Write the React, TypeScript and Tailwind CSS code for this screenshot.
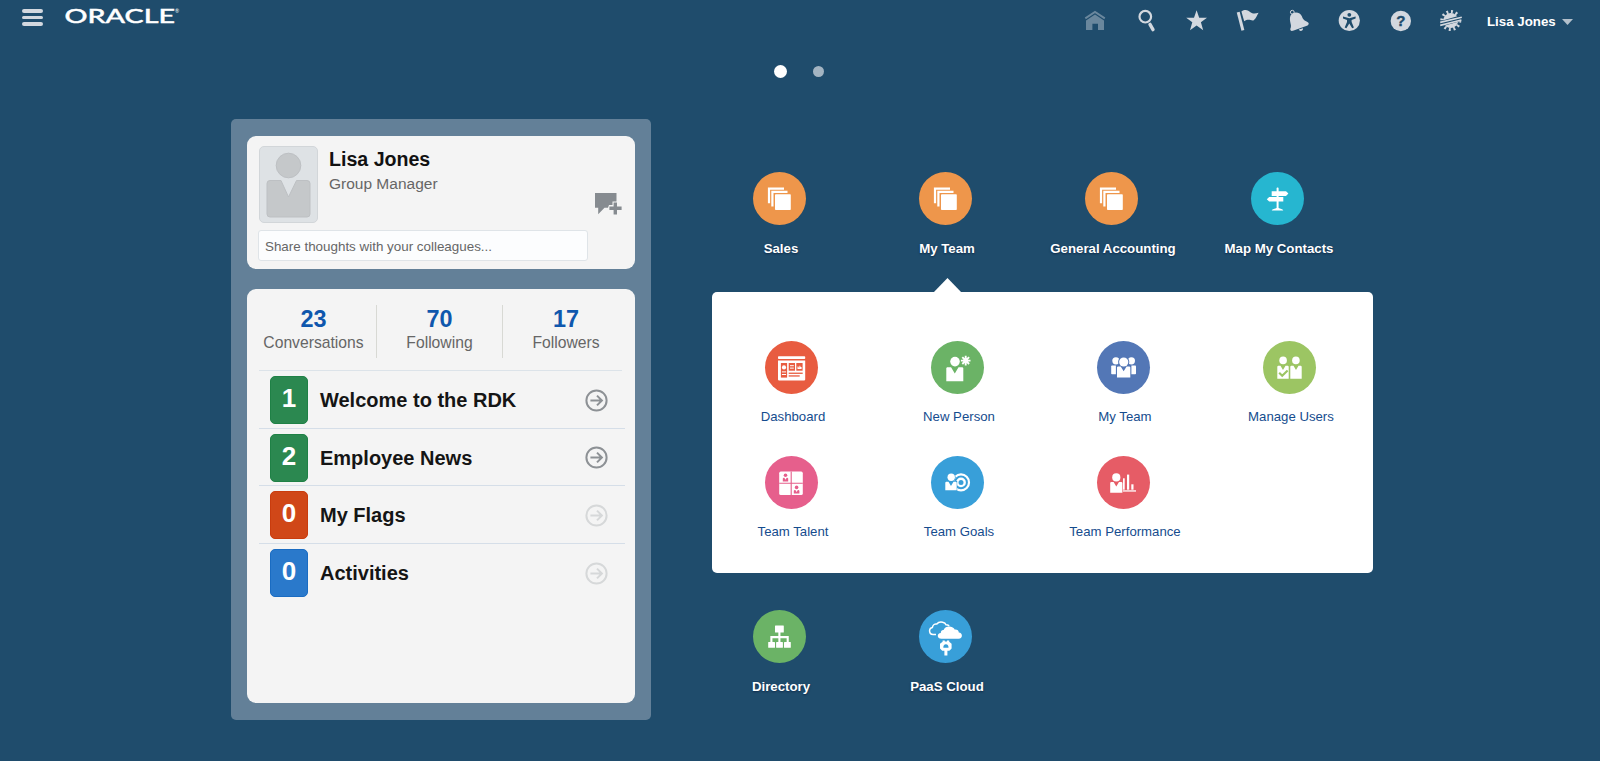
import { ReactNode } from "react";

interface Tile {
  label: string;
  color: string;
  icon: ReactNode;
}

interface NewsItem {
  count: number;
  label: string;
  color: string;
  active: boolean;
}

// Shoulders with a V-shaped collar, used by most of the people icons
function Body({ x, y, w, h, fill = "#fff" }: { x: number; y: number; w: number; h: number; fill?: string }) {
  const cx = x + w / 2;
  const n = w * 0.22;
  return (
    <path
      fill={fill}
      d={`M${x + 0.8} ${y}H${cx - n}L${cx} ${y + n * 1.7}L${cx + n} ${y}H${x + w - 0.8}L${x + w} ${y + 0.8}V${y + h}H${x}V${y + 0.8}Z`}
    />
  );
}

const stackIcon = (
  <>
    <path d="M16 31.3V16.6H31" fill="none" stroke="#fff" strokeWidth="2.2" />
    <path d="M19.4 34.6V19.9H34.5" fill="none" stroke="#fff" strokeWidth="2.2" />
    <rect x="22" y="22.3" width="15.8" height="15.8" rx="0.8" />
  </>
);

const signpostIcon = (
  <>
    <rect x="25.6" y="15.6" width="2" height="22" rx="0.8" />
    <path d="M20.7 19.2H35L37.4 21.5L35 23.9H20.7Z" />
    <path d="M32.3 24.9H18.2L15.8 27.2L18.2 29.5H32.3Z" />
    <path d="M20.7 38.4C21.2 36.8 24 36.9 25.6 36H27.6C29.2 36.9 31.8 36.8 32.3 38.4Z" />
  </>
);

const dashboardIcon = (
  <>
    <rect x="13" y="15.2" width="27.2" height="2.8" rx="0.8" />
    <path d="M13 19.4H40.2V38.6Q40.2 39.4 39.4 39.4H13.8Q13 39.4 13 38.6Z" />
    <g fill="#e85c40">
      <rect x="15.9" y="22" width="6.2" height="14.6" />
      <rect x="23.7" y="22" width="6.3" height="7.7" />
      <rect x="31.3" y="22" width="6.3" height="7.7" />
      <rect x="23.7" y="31.6" width="14" height="1.3" />
      <rect x="23.7" y="34.3" width="11" height="1.3" />
    </g>
    <circle cx="19" cy="26.4" r="2.1" />
    <rect x="16.9" y="30.4" width="4.2" height="1" />
    <rect x="16.9" y="33" width="4.2" height="1" />
    <rect x="25" y="24.2" width="3.8" height="1" />
    <rect x="25" y="26.6" width="3.8" height="1" />
    <path d="M32.5 28V25.5H33.5V26.5H34.4V24.8H35.4V26H36.6V28Z" />
  </>
);

const newPersonIcon = (
  <>
    <circle cx="24" cy="20.6" r="4.8" />
    <Body x={15.3} y={26.2} w={17} h={14} />
    <g stroke="#fff" strokeWidth="1.9">
      <path d="M34.7 14.8V24.4M29.9 19.6H39.5M31.3 16.2L38.1 23M38.1 16.2L31.3 23" />
    </g>
  </>
);

const teamIcon = (
  <>
    <circle cx="18.9" cy="19.8" r="3.6" />
    <circle cx="34.4" cy="19.8" r="3.6" />
    <rect x="14.2" y="24.4" width="8" height="8.8" rx="0.8" />
    <rect x="31" y="24.4" width="8" height="8.8" rx="0.8" />
    <rect x="18.9" y="24" width="15.5" height="13" fill="#5377b6" />
    <circle cx="26.7" cy="21" r="5.6" fill="#5377b6" />
    <circle cx="26.7" cy="21" r="4.6" />
    <Body x={20} y={25.4} w={13.3} h={11.2} />
  </>
);

const manageIcon = (
  <>
    <circle cx="20.1" cy="19.4" r="3.8" />
    <circle cx="32.9" cy="19.4" r="3.8" />
    <Body x={14.3} y={24.8} w={11.4} h={13} />
    <Body x={27.3} y={24.8} w={11.4} h={13} />
    <path d="M16.2 31.8L19.2 34.8L24.6 29.4" fill="none" stroke="#9cc563" strokeWidth="2.1" />
  </>
);

const talentIcon = (
  <>
    <rect x="14.2" y="15.6" width="23.6" height="23.4" rx="1.6" />
    <path d="M26.2 15.6V39M14.2 27.2H37.8" stroke="#e65f8c" strokeWidth="1.1" />
    <circle cx="20.5" cy="19.2" r="1.8" fill="#e65f8c" />
    <Body x={17.8} y={21.8} w={5.4} h={3.7} fill="#e65f8c" />
    <circle cx="31.6" cy="31.4" r="1.8" fill="#e65f8c" />
    <Body x={28.8} y={33.9} w={5.6} h={3.5} fill="#e65f8c" />
  </>
);

const goalsIcon = (
  <>
    <circle cx="30" cy="26.4" r="8" fill="none" stroke="#fff" strokeWidth="2.2" />
    <circle cx="30" cy="26.4" r="3.7" fill="none" stroke="#fff" strokeWidth="2.4" />
    <path d="M12 25H26.2V36H12Z" fill="#389fd9" />
    <circle cx="20.2" cy="21.3" r="4.4" fill="#389fd9" />
    <circle cx="20.2" cy="21.3" r="3.7" />
    <Body x={14.3} y={25.8} w={11.4} h={8.4} />
  </>
);

const performanceIcon = (
  <>
    <circle cx="19.3" cy="21.4" r="4.1" />
    <Body x={13.2} y={26} w={12.2} h={10.8} />
    <rect x="26" y="22.3" width="1.7" height="11.4" />
    <rect x="30" y="18.6" width="2.2" height="15.1" />
    <rect x="34.3" y="28.3" width="2.2" height="5.4" />
    <rect x="26" y="34.3" width="13" height="1.3" />
  </>
);

const directoryIcon = (
  <>
    <rect x="22" y="15.6" width="8.8" height="7" rx="0.5" />
    <path d="M26.4 22V32M18.4 32V27.1H34.7V32" fill="none" stroke="#fff" strokeWidth="2.1" />
    <rect x="15.2" y="32" width="6.8" height="5.8" rx="0.5" />
    <rect x="23.1" y="32" width="6.8" height="5.8" rx="0.5" />
    <rect x="31" y="32" width="6.8" height="5.8" rx="0.5" />
  </>
);

const cloudIcon = (
  <>
    <path
      d="M17 24.6H14.2C11.6 24.3 10.4 22.3 10.6 20.2C10.8 18.4 12.2 17.6 13.4 17.4C13.8 14.6 16 13.6 17.8 14C19 12.4 21.4 11.8 23.6 12.2C25.6 12.6 26.6 13.6 27 14.8C28.4 14.8 29.4 15.2 30.2 15.8"
      fill="none"
      stroke="#fff"
      strokeWidth="1.5"
    />
    <path d="M22.4 28.8C17.8 28.8 17.6 23.4 21.8 23C21.6 20.4 23.6 19.6 24.6 20C25.4 17.6 28.2 16.4 30.8 16.6C33.6 16.8 35.2 18.4 35.6 19.6C38 19.2 39.8 20.6 39.8 22.4C43.8 22.6 44.2 28.6 39.6 28.8Z" />
    <path d="M23.6 30.4H25.8V31.6H28V30.4H30.2V31.8L32.6 33.8V38.6L30.4 40.8H28.4V45.6H25.4V40.8H23.2L21 38.6V33.8L23.6 31.8Z" />
    <path d="M24.3 37.8Q24.2 34.6 26.9 34.3Q29.6 34.6 29.5 37.8Z" fill="#389fd9" />
  </>
);

const topTiles: Tile[] = [
  { label: "Sales", color: "bg-[#ee964b]", icon: stackIcon },
  { label: "My Team", color: "bg-[#ee964b]", icon: stackIcon },
  { label: "General Accounting", color: "bg-[#ee964b]", icon: stackIcon },
  { label: "Map My Contacts", color: "bg-[#26b6d0]", icon: signpostIcon },
];

const teamTiles: Tile[] = [
  { label: "Dashboard", color: "bg-[#e85c40]", icon: dashboardIcon },
  { label: "New Person", color: "bg-[#6bb366]", icon: newPersonIcon },
  { label: "My Team", color: "bg-[#5377b6]", icon: teamIcon },
  { label: "Manage Users", color: "bg-[#9cc563]", icon: manageIcon },
  { label: "Team Talent", color: "bg-[#e65f8c]", icon: talentIcon },
  { label: "Team Goals", color: "bg-[#389fd9]", icon: goalsIcon },
  { label: "Team Performance", color: "bg-[#e65c66]", icon: performanceIcon },
];

const bottomTiles: Tile[] = [
  { label: "Directory", color: "bg-[#6bb366]", icon: directoryIcon },
  { label: "PaaS Cloud", color: "bg-[#389fd9]", icon: cloudIcon },
];

const stats = [
  { value: 23, label: "Conversations", cell: "w-[118px] border-r pr-[8px]" },
  { value: 70, label: "Following", cell: "w-[126px] border-r" },
  { value: 17, label: "Followers", cell: "w-[126px]" },
];

const news: NewsItem[] = [
  { count: 1, label: "Welcome to the RDK", color: "bg-[#2b8850] border-[#1f8146]", active: true },
  { count: 2, label: "Employee News", color: "bg-[#2b8850] border-[#1f8146]", active: true },
  { count: 0, label: "My Flags", color: "bg-[#d04718] border-[#c93c0e]", active: false },
  { count: 0, label: "Activities", color: "bg-[#2a79cb] border-[#1a6cc2]", active: false },
];

function TileButton({ tile, light }: { tile: Tile; light?: boolean }) {
  return (
    <div className="flex w-[166px] flex-col items-center">
      <div className={`h-[53px] w-[53px] rounded-full ${tile.color}`}>
        <svg viewBox="0 0 53 53" className="h-full w-full" fill="#fff">
          {tile.icon}
        </svg>
      </div>
      <span
        className={
          light
            ? "mt-[15px] pl-[3px] text-[13.2px] leading-4 whitespace-nowrap text-[#154c8e]"
            : "mt-4 pl-[3px] text-[13.25px] leading-4 font-bold whitespace-nowrap text-white [text-shadow:0_1px_2px_rgba(0,20,50,0.6)]"
        }
      >
        {tile.label}
      </span>
    </div>
  );
}

function Header() {
  return (
    <header className="flex h-[42px] justify-between">
      <div className="flex pl-[22px]">
        <div className="flex flex-col gap-[3px] pt-[9px]">
          <div className="h-[3.6px] w-[21px] rounded-sm bg-[#d3d8df]" />
          <div className="h-[3.6px] w-[21px] rounded-sm bg-[#d3d8df]" />
          <div className="h-[3.6px] w-[21px] rounded-sm bg-[#d3d8df]" />
        </div>
        <svg className="ml-[22px] h-8 w-[120px]" viewBox="0 0 120 32" fill="#fff">
          <text
            x="-0.5"
            y="23.2"
            fontFamily="Lato, sans-serif"
            fontSize="19.8"
            fontWeight="500"
            stroke="#fff"
            strokeWidth="0.4"
            textLength="110.5"
            lengthAdjust="spacingAndGlyphs"
          >
            ORACLE
          </text>
          <text x="110" y="13" fontFamily="Lato, sans-serif" fontSize="5">
            ®
          </text>
        </svg>
      </div>

      <div className="flex">
        <svg className="h-[42px] w-[400px]" viewBox="1080 0 400 42" fill="#d3d8df">
          {/* Home */}
          <g fill="#6a879d">
            <path d="M1086 20.6L1095 14.4L1104 20.6V30H1098V23.8H1092.4V30H1086Z" />
            <path d="M1085.3 18.4L1095 12L1104.8 18.4" fill="none" stroke="#6a879d" strokeWidth="1.9" />
          </g>

          {/* Search */}
          <circle cx="1145.3" cy="16.7" r="5.8" fill="none" stroke="#d3d8df" strokeWidth="2.2" />
          <path d="M1150 24.4L1153 29.6" stroke="#d3d8df" strokeWidth="3.4" strokeLinecap="round" />

          {/* Favorites */}
          <path d="M1196.6 10.3L1199.2 17.7H1207L1200.9 22.3L1203.2 30.2L1196.6 25.6L1190 30.2L1192.3 22.3L1186.2 17.7H1194Z" />

          {/* Flag */}
          <path d="M1238.2 12.2L1242.9 30.4" stroke="#d3d8df" strokeWidth="3" />
          <path d="M1241.4 11.4C1245.5 8.6 1248.5 10.4 1250.4 12.2C1252.6 14 1255.2 13.8 1258.6 12.8C1256.8 15.2 1256.4 18.4 1253.4 20.4C1250.4 20.8 1248.8 18.2 1244.2 21.2Z" />

          {/* Notifications */}
          <circle cx="1292.3" cy="12.2" r="1.9" fill="none" stroke="#d3d8df" strokeWidth="1" />
          <path d="M1290.4 15.8C1291.8 12.6 1296.4 11.2 1299.6 13.6C1303 16.4 1301.6 18.4 1304.6 20.4C1306.6 21.6 1308.8 22 1308.8 24L1307.6 25.6L1293 30.8C1290.8 31.2 1290 30.4 1290.4 28.6C1292.4 25 1288.6 21.4 1290.4 15.8Z" />
          <path d="M1298.8 29.6L1303 28.2C1303.4 31 1299.6 32 1298.8 29.6Z" />

          {/* Accessibility */}
          <circle cx="1349.3" cy="20.5" r="10.6" />
          <g fill="#1f4c6c">
            <circle cx="1349.3" cy="14.8" r="1.9" />
            <path d="M1343 16.6L1349.3 18.2L1355.6 16.6V18.6L1351.6 19.9V22L1353.9 27.4L1352.2 28.2L1349.3 23.4L1346.4 28.2L1344.7 27.4L1347 22V19.9L1343 18.6Z" />
          </g>

          {/* Help */}
          <circle cx="1400.8" cy="21" r="10.2" />
          <text
            x="1400.8"
            y="26.3"
            textAnchor="middle"
            fontFamily="Liberation Sans, sans-serif"
            fontSize="15"
            fontWeight="700"
            fill="#1f4c6c"
            stroke="#1f4c6c"
            strokeWidth="0.4"
          >
            ?
          </text>

          {/* Settings */}
          <circle
            cx="1450.8"
            cy="20.5"
            r="8.8"
            fill="none"
            stroke="#d3d8df"
            strokeWidth="3.4"
            strokeDasharray="1.9 2.7"
          />
          <circle cx="1450.8" cy="20.5" r="7.4" />
          <path d="M1439 24.4L1462.5 17.6" stroke="#1f4c6c" strokeWidth="5.6" />
          <path d="M1440.2 22.4L1461.8 17.2M1440.2 25.4L1461.4 20" stroke="#d3d8df" strokeWidth="1.6" />
        </svg>
        <div className="flex h-[42px] items-center pl-[7px] text-[13.3px] leading-4 font-bold text-white">
          <span className="w-[75px] pt-[2px]">Lisa Jones</span>
          <svg className="mt-px mr-[27px] h-[6px] w-[11px]" viewBox="0 0 11 6" fill="#b3c0cb">
            <path d="M0 0H11L5.5 6Z" />
          </svg>
        </div>
      </div>
    </header>
  );
}

function ProfileCard() {
  return (
    <div className="h-[133px] rounded-[9px] bg-[#f4f4f4] px-3 pt-2.5">
      <div className="flex">
        <svg className="h-[77px] w-[59px]" viewBox="0 0 59 77">
          <rect x="0.5" y="0.5" width="58" height="76" rx="4.5" fill="#dee2e5" stroke="#d2d6d9" />
          <circle cx="29.5" cy="19.5" r="12.3" fill="#c5c8ca" stroke="#bdc0c3" />
          <path
            d="M11 34.5H22L29.5 51L37.5 34.5H48Q51 34.5 51 37.5V68Q51 71 48 71H11Q8 71 8 68V37.5Q8 34.5 11 34.5Z"
            fill="#c5c8ca"
            stroke="#bdc0c3"
          />
        </svg>
        <div className="flex-1 pl-[11px]">
          <div className="pt-px text-[19.6px] leading-6 font-bold text-[#111]">Lisa Jones</div>
          <div className="pt-px text-[15.5px] leading-6 text-[#666]">Group Manager</div>
        </div>
        <svg className="mt-[47px] mr-px h-[22px] w-[27px]" viewBox="0 0 27 22" fill="#868b90">
          <path d="M0 0H21.5V8.5H17.5V12H14L13 14.8H9.5L3.2 21.3V14.8H0Z" />
          <path d="M18.6 9.6H22V13.6H26.6V17H22V21.4H18.6V17H14.4V13.6H18.6Z" />
        </svg>
      </div>
      <div className="mt-[7px] -ml-px flex h-[31px] w-[330px] items-center rounded-[3px] border border-[#dfe4e8] bg-[#fcfdfe] px-1.5 pt-[3px] text-[13.4px] whitespace-nowrap text-[#666]">
        Share thoughts with your colleagues...
      </div>
    </div>
  );
}

function ArrowIcon({ active }: { active: boolean }) {
  return (
    <svg
      className={active ? "h-[23px] w-[23px] text-[#8d9195]" : "h-[23px] w-[23px] text-[#d6d8d9]"}
      viewBox="0 0 23 23"
      fill="none"
      stroke="currentColor"
    >
      <circle cx="11.5" cy="11.5" r="10.1" strokeWidth="2" />
      <path d="M5.4 11.5H16.6M12 6.6L16.9 11.5L12 16.4" strokeWidth="2" />
    </svg>
  );
}

function ActivityCard() {
  return (
    <div className="mt-[20px] h-[414.5px] rounded-[9px] bg-[#f4f4f4] pr-[10px] pl-3">
      <div className="mr-[3px] flex h-[82.5px] border-b border-[#dce3e9] pt-4">
        {stats.map((stat) => (
          <div key={stat.label} className={`h-[53px] shrink-0 border-[#d8d9d4] pt-0.5 text-center ${stat.cell}`}>
            <div className="text-[23.4px] leading-6 font-bold text-[#0f57ad]">{stat.value}</div>
            <div className="-mx-2 text-[15.7px] leading-6 text-[#666]">{stat.label}</div>
          </div>
        ))}
      </div>

      {news.map((item) => (
        <div
          key={item.label}
          className="flex h-[57.5px] items-center border-b border-[#d5dee8] pr-[17px] pl-[11px] last:border-b-0"
        >
          <div
            className={`mt-px flex h-[48px] w-[38px] justify-center rounded-[5px] border pt-[2px] text-[26px] leading-[38px] font-bold text-white ${item.color}`}
          >
            {item.count}
          </div>
          <div className="flex-1 pt-px pl-3 text-[20px] leading-[30px] font-bold text-[#151515]">{item.label}</div>
          <div className="pt-px">
            <ArrowIcon active={item.active} />
          </div>
        </div>
      ))}
    </div>
  );
}

export default function App() {
  return (
    <div className="h-[761px] w-[1600px] overflow-hidden bg-[#1f4c6c] font-['Liberation_Sans',Arial,sans-serif]">
      <Header />

      {/* Page dots */}
      <div className="flex h-[59px] items-center gap-[26px] pl-[774px]">
        <div className="h-[13px] w-[13px] rounded-full bg-white" />
        <div className="h-[10.5px] w-[10.5px] rounded-full bg-[#a3b4c2]" />
      </div>

      <div className="flex pt-[18.4px] pl-[230.7px]">
        <aside className="h-[600.5px] w-[420.3px] rounded-[5px] bg-[#638098] px-[16.3px] pt-[16.6px]">
          <ProfileCard />
          <ActivityCard />
        </aside>

        <main className="pt-[52.2px] pl-[45.5px]">
          <div className="flex">
            {topTiles.map((tile) => (
              <TileButton key={tile.label} tile={tile} />
            ))}
          </div>

          <div className="relative mt-[35.5px] ml-[15.5px] h-[280.5px] w-[661px] rounded-[5px] bg-white">
            <svg className="absolute -top-[14px] left-[221px] h-[15px] w-[29px]" viewBox="0 0 29 15" fill="#fff">
              <path d="M14.5 0L29 15H0Z" />
            </svg>
            <div className="-ml-[3.5px] flex flex-wrap gap-y-[31px] pt-[48.5px]">
              {teamTiles.map((tile) => (
                <TileButton key={tile.label} tile={tile} light />
              ))}
            </div>
          </div>

          <div className="mt-[37px] flex">
            {bottomTiles.map((tile) => (
              <TileButton key={tile.label} tile={tile} />
            ))}
          </div>
        </main>
      </div>
    </div>
  );
}
